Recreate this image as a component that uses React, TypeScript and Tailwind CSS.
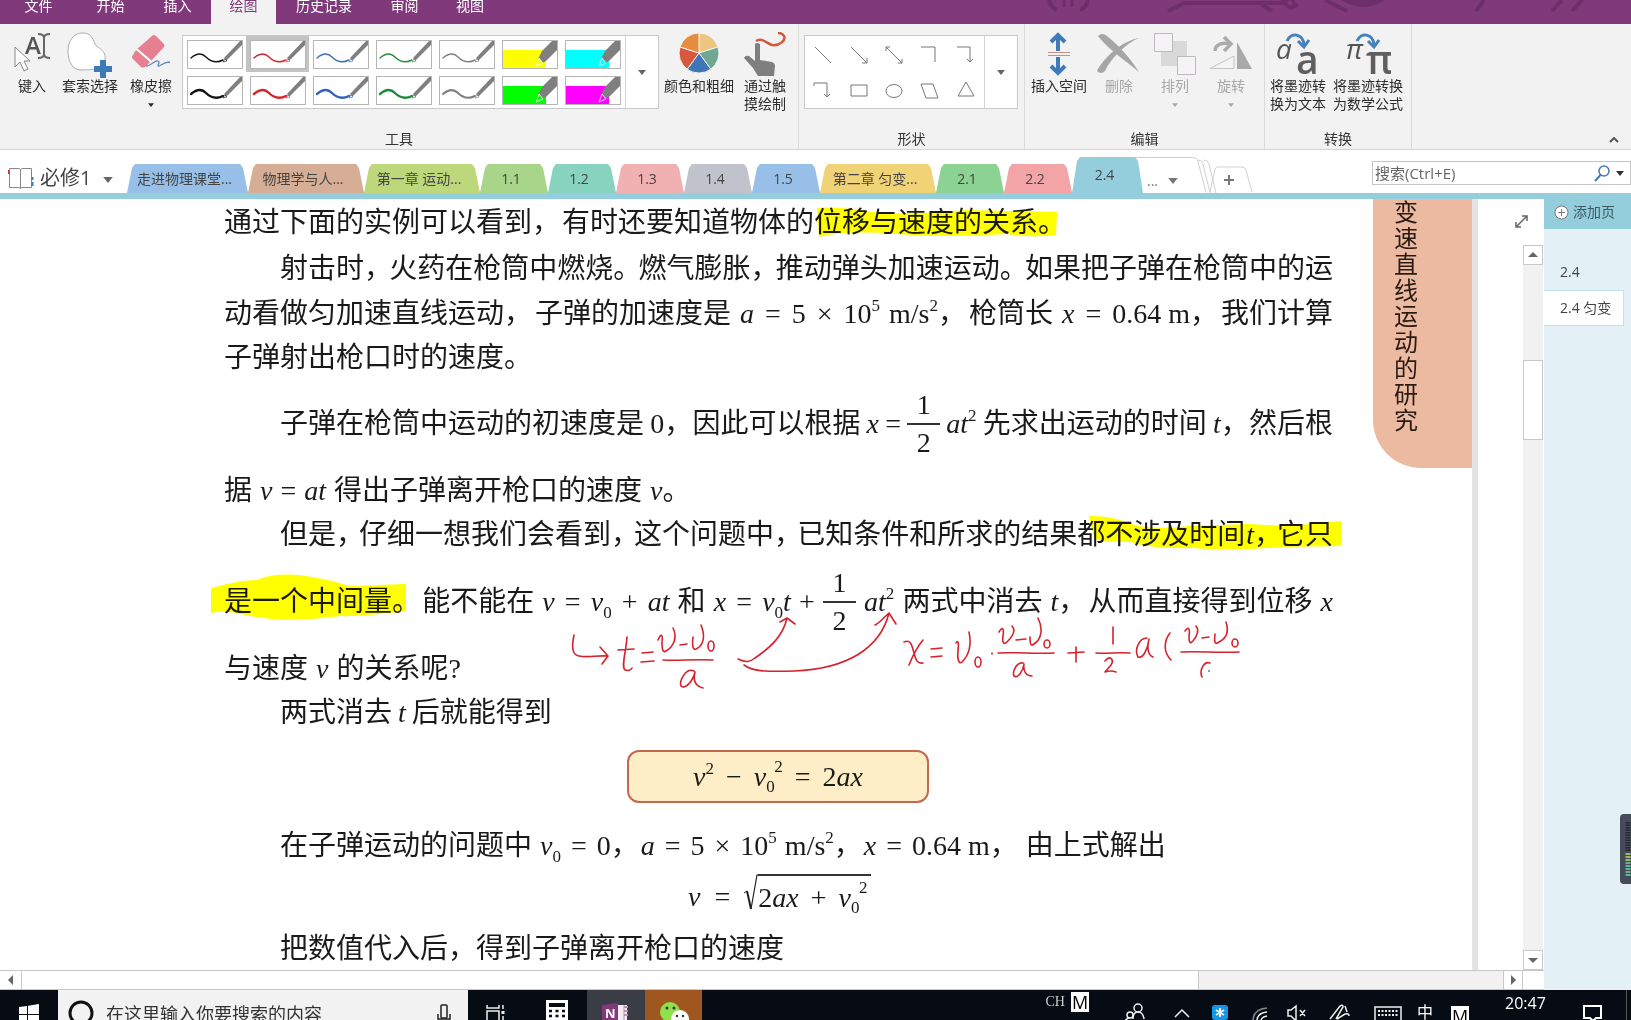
import React, { useState } from 'react';
import clsx from 'clsx';

const sections = [
  { name: '走进物理课堂...', width: 'w-[121px]', color: 'bg-[#98bfe8]' },
  { name: '物理学与人...', width: 'w-[116px]', color: 'bg-[#d5ae95]' },
  { name: '第一章 运动...', width: 'w-[116px]', color: 'bg-[#bdd87a]' },
  { name: '1.1', width: 'w-[68px]', color: 'bg-[#a8d58a]' },
  { name: '1.2', width: 'w-[68px]', color: 'bg-[#87d3bf]' },
  { name: '1.3', width: 'w-[68px]', color: 'bg-[#f1b1b3]' },
  { name: '1.4', width: 'w-[68px]', color: 'bg-[#c0c3cc]' },
  { name: '1.5', width: 'w-[68px]', color: 'bg-[#98bfe8]' },
  { name: '第二章 匀变...', width: 'w-[116px]', color: 'bg-[#f0d277]' },
  { name: '2.1', width: 'w-[68px]', color: 'bg-[#8bd293]' },
  { name: '2.2', width: 'w-[68px]', color: 'bg-[#f3a4a6]' },
  { name: '2.4', width: 'w-[71px]', color: 'bg-[#94cddb]' },
];

const menus = [
  { name: '文件', width: 'w-[77px]' },
  { name: '开始', width: 'w-[67px]' },
  { name: '插入', width: 'w-[67px]' },
  { name: '绘图', width: 'w-[65px]' },
  { name: '历史记录', width: 'w-[96px]' },
  { name: '审阅', width: 'w-[65px]' },
  { name: '视图', width: 'w-[66px]' },
];

const pens = [
  { color: '#111111', size: 1.4 },
  { color: '#d8232a', size: 1.4 },
  { color: '#3a6fb5', size: 1.4 },
  { color: '#2a8a3e', size: 1.4 },
  { color: '#7f7f7f', size: 1.4 },
  { color: '#ffff00', marker: true },
  { color: '#00ffff', marker: true },
  { color: '#111111', size: 2.4 },
  { color: '#d8232a', size: 2.4 },
  { color: '#2f62b8', size: 2.4 },
  { color: '#1f8a3b', size: 2.4 },
  { color: '#7f7f7f', size: 2 },
  { color: '#00ff00', marker: true },
  { color: '#ff00ff', marker: true },
];

function Caret({ className = '' }: { className?: string }) {
  return (
    <svg width="8" height="5" viewBox="0 0 8 5" className={clsx('shrink-0', className)}>
      <path d="M0 0h8L4 5z" fill="currentColor" />
    </svg>
  );
}

// ---------- 功能区 ----------

function MenuBar() {
  const [active, setActive] = useState('绘图');
  return (
    <nav className="relative flex h-6 shrink-0 overflow-hidden bg-[#80397b]">
      {menus.map((m) => (
        <button
          key={m.name}
          onClick={() => setActive(m.name)}
          className={clsx(
            'flex h-6 justify-center text-sm leading-3',
            m.width,
            m.name === active ? 'bg-[#f2f2f2] text-[#80397b]' : 'text-white',
          )}
        >
          {m.name}
        </button>
      ))}
      <svg className="absolute right-0 top-0" width="600" height="24" viewBox="1031 0 600 24" fill="none" stroke="#6d2f69" strokeWidth="4">
        <path d="M1049 0q2 8 8 10M1088 0q-2 8-8 10" />
        <path d="M1064 0v7M1072 0v7" strokeWidth="3" />
        <path d="M1168 11l16-8h104M1262 5l10 6M1282 0l8 8 8-3M1325 0l22 11" />
        <circle cx="1290" cy="3" r="4" fill="#80397b" strokeWidth="3" />
        <path d="M1341 0q22 14 44 0z" fill="#6d2f69" stroke="none" />
        <path d="M1484 0l-8 11M1562 0l-10 11M1582 0l-10 11" />
      </svg>
    </nav>
  );
}

function ToolButton({ label, width, icon, disabled, caret }: {
  label: string[];
  width: string;
  icon: React.ReactNode;
  disabled?: boolean;
  caret?: boolean;
}) {
  return (
    <button
      disabled={disabled}
      className={clsx('flex shrink-0 flex-col items-center pt-2', width, disabled ? 'text-[#a8a8a8]' : 'text-[#2b2b2b]')}
    >
      <span className="flex h-[45px] items-start justify-center">{icon}</span>
      {label.map((l) => (
        <span key={l} className="whitespace-nowrap text-sm leading-[18px]">{l}</span>
      ))}
      {caret && <Caret className="mt-2 h-1 w-1.5" />}
    </button>
  );
}

function Group({ title, width, children }: { title: string; width: string; children: React.ReactNode }) {
  return (
    <section className={clsx('flex shrink-0 flex-col border-r border-[#dadada]', width)}>
      <div className="flex flex-1 items-start">{children}</div>
      <h2 className="pb-[3px] text-center text-sm leading-[14px] text-[#333]">{title}</h2>
    </section>
  );
}

function PenIcon({ color, size, marker }: { color: string; size?: number; marker?: boolean }) {
  return (
    <svg width="54" height="27" viewBox="0 0 54 27">
      {marker ? (
        <>
          <path d="M0 9h43v18H0z" fill={color} />
          <path d="M54 0v9L43 20l-5 3-3-5 4-8L49 0z" fill="#7f7f7f" />
          <path d="M36 17l4 5-7 3z" fill={color} stroke="#fff" strokeWidth=".8" />
        </>
      ) : (
        <>
          <path d="M3 17C9 12 14 12 18 16s9 7 17 3" fill="none" stroke={color} strokeWidth={size} strokeLinecap="round" />
          <path d="M36 17L52 0h2v4L38 20z" fill="#7f7f7f" />
          <path d="M37 18l2 2-4 1z" fill="#fff" stroke={color} strokeWidth=".6" />
        </>
      )}
    </svg>
  );
}

function PenGallery() {
  const [selected, setSelected] = useState(1);
  return (
    <div className="ml-0.5 mt-[11px] flex h-[74px] w-[477px] border border-[#c9c9c9] bg-white">
      <div className="grid flex-1 grid-cols-7 border-r border-[#d5d5d5]">
        {pens.map((p, i) => (
          <button
            key={i}
            aria-label={`笔 ${i + 1}`}
            onClick={() => setSelected(i)}
            className={clsx('flex items-center justify-center', i === selected && 'bg-[#c3c3c3]')}
          >
            <span className="border border-[#b5b5b5] bg-white">
              <PenIcon {...p} />
            </span>
          </button>
        ))}
      </div>
      <button aria-label="更多笔" className="flex w-8 items-center justify-center text-[#666]">
        <Caret />
      </button>
    </div>
  );
}

const shapes = [
  'M4 5l16 16',
  'M4 5l16 16M20 16v5h-5',
  'M4 5l16 16M20 17v4h-4M4 9V5h4',
  'M3 5h14v15',
  'M3 5h13v15M13 17l3 3 3-3',
  'M3 8V5h13v14M13 16l3 3 3-3',
  'M4 7h16v11H4z',
  'M4 13a8 6.500 0 1 0 16 0a8 6.500 0 1 0-16 0z',
  'M3 6h12l5 14H8z',
  'M12 4l8 14H4z',
];

function ShapeGallery() {
  return (
    <div className="ml-[5px] mt-[11px] flex h-[74px] w-[214px] border border-[#c9c9c9] bg-white">
      <div className="grid flex-1 grid-cols-5 border-r border-[#d5d5d5]">
        {shapes.map((d, i) => (
          <button key={i} aria-label={`形状 ${i + 1}`} className="flex items-center justify-center">
            <svg width="24" height="24" viewBox="0 0 24 24" fill="none" stroke="#777" strokeWidth="1">
              <path d={d} />
            </svg>
          </button>
        ))}
      </div>
      <button aria-label="更多形状" className="flex w-8 items-center justify-center text-[#666]">
        <Caret />
      </button>
    </div>
  );
}

const TypeIcon = () => (
  <svg width="40" height="44" viewBox="12 32 40 44">
    <text x="25" y="54" fontSize="24" fontWeight="600" fill="#555" fontFamily="Open Sans, sans-serif">A</text>
    <path d="M38 34q6 0 6 4v16q0 4-6 4M50 34q-6 0-6 4M44 54q0 4 6 4" fill="none" stroke="#666" strokeWidth="2" />
    <path d="M15 47v20l5-5 4 9 4-2-4-8h6z" fill="#fff" stroke="#888" />
  </svg>
);

const LassoIcon = () => (
  <svg width="46" height="46" viewBox="71 32 46 46">
    <path d="M87 33c-10 0-15 8-15 18s4 20 15 19c8-1 20 2 22-10 2-10-8-12-10-16-2-6-5-11-12-11z" fill="#fff" stroke="#999" strokeWidth=".8" />
    <path d="M104 60h6v6h6v6h-6v6h-6v-6h-6v-6h6z" fill="#3f7ab8" />
  </svg>
);

const EraserIcon = () => (
  <svg width="40" height="38" viewBox="135 34 40 38">
    <path d="M156 38q2-2 4 0l8 8q1 2 0 3l-13 14-14-12z" fill="#e67f92" />
    <path d="M140 52l14 12-5 5q-2 1-4 0l-8-8q-2-2 0-4z" fill="#e67f92" />
    <path d="M141 51l14 12" stroke="#fff" strokeWidth="1.500" />
    <path d="M150 68c5 0 9-6 12-5s-2 6 1 5 5-4 11-4" fill="none" stroke="#5b87c0" strokeWidth="1.300" />
  </svg>
);

const PieIcon = () => (
  <svg width="42" height="42" viewBox="-21 -21 42 42" stroke="#f2f2f2" strokeWidth="1">
    <path d="M0 0V-20A20 20 0 0 1 19-6z" fill="#ecc681" />
    <path d="M0 0L19-6A20 20 0 0 1 11.800 16.200z" fill="#70a792" />
    <path d="M0 0L11.800 16.200A20 20 0 0 1-11.800 16.200z" fill="#3f76b8" />
    <path d="M0 0L-11.800 16.200A20 20 0 0 1-19-6z" fill="#d8583d" />
    <path d="M0 0L-19-6A20 20 0 0 1 0-20z" fill="#e58c3f" />
  </svg>
);

const TouchIcon = () => (
  <svg width="44" height="44" viewBox="744 31 44 44">
    <path d="M757 40c6-4 10 2 16 4 8 1 14-5 12-9-1-2-4-3-6-3" fill="none" stroke="#d2573d" strokeWidth="2.500" />
    <path d="M756 43q2-2 5 0v16l12 2q3 1 3 4l-1 10h-16l-5-8-9-10q1-3 5-2l6 5z" fill="#7f7f7f" />
  </svg>
);

const SpaceIcon = () => (
  <svg width="24" height="44" viewBox="1048 31 24 44">
    <path d="M1057 36h4v14h-4zM1057 56h4v14h-4z" fill="#3f7ab8" />
    <path d="M1052 41l7-7 7 7M1052 65l7 7 7-7" fill="none" stroke="#3f7ab8" strokeWidth="4" />
    <path d="M1049 51.500h22M1049 54.500h22" stroke="#c98f86" />
  </svg>
);

const DeleteIcon = () => (
  <svg width="44" height="42" viewBox="1098 32 44 42">
    <path d="M1099 36q4-4 9 0c10 8 22 20 32 36-14-12-28-20-41-36z" fill="#a6a6a6" />
    <path d="M1140 38c-14 6-28 20-34 33q-4 4-8 0c6-12 24-30 42-33z" fill="#a6a6a6" />
  </svg>
);

const ArrangeIcon = () => (
  <svg width="44" height="44" viewBox="1153 31 44 44">
    <path d="M1161 40h26v25h-26z" fill="#d9d9d9" />
    <path d="M1154.500 32.500h18v18h-18zM1177.500 55.500h18v18h-18z" fill="#f5f3f5" stroke="#bbb" />
  </svg>
);

const RotateIcon = () => (
  <svg width="44" height="38" viewBox="1209 32 44 38">
    <path d="M1215 51c0-7 8-9 15-7" fill="none" stroke="#ababab" strokeWidth="3.500" />
    <path d="M1224 37l7 7-7 7" fill="none" stroke="#ababab" strokeWidth="3.500" />
    <path d="M1210 68.500h24V56z" fill="#f5f3f5" stroke="#c4c4c4" />
    <path d="M1237 42l15 27h-15z" fill="#a9a9a9" />
  </svg>
);

function ConvertIcon({ glyph }: { glyph: string }) {
  return (
    <svg width="46" height="44" viewBox="0 0 46 44">
      <text x="1" y="27" fontSize="28" fontStyle="italic" fill="#555" fontFamily="Open Sans, sans-serif">{glyph}</text>
      <text x="21" y="42" fontSize="39" fontWeight="600" fill="#5f5f5f" fontFamily="Open Sans, sans-serif">{glyph}</text>
      <path d="M12 9c4-9 16-8 17 4" fill="none" stroke="#4680bd" strokeWidth="3" />
      <path d="M23 9l6 6 5-7" fill="none" stroke="#4680bd" strokeWidth="3" />
    </svg>
  );
}

function Ribbon() {
  return (
    <div className="flex h-[126px] shrink-0 border-b border-[#d4d4d4] bg-[#f2f2f2]">
      <Group title="工具" width="w-[799px]">
        <div className="flex pl-1.5">
          <ToolButton label={['键入']} width="w-[52px]" icon={<TypeIcon />} />
          <ToolButton label={['套索选择']} width="w-[64px]" icon={<LassoIcon />} />
          <ToolButton label={['橡皮擦']} width="w-[58px]" icon={<EraserIcon />} caret />
          <PenGallery />
          <ToolButton label={['颜色和粗细']} width="w-[80px]" icon={<PieIcon />} />
          <ToolButton label={['通过触', '摸绘制']} width="w-[52px]" icon={<TouchIcon />} />
        </div>
      </Group>
      <Group title="形状" width="w-[226px]">
        <ShapeGallery />
      </Group>
      <Group title="编辑" width="w-[240px]">
        <ToolButton label={['插入空间']} width="w-[68px]" icon={<SpaceIcon />} />
        <ToolButton label={['删除']} width="w-[52px]" icon={<DeleteIcon />} disabled />
        <ToolButton label={['排列']} width="w-[60px]" icon={<ArrangeIcon />} disabled caret />
        <ToolButton label={['旋转']} width="w-[52px]" icon={<RotateIcon />} disabled caret />
      </Group>
      <Group title="转换" width="w-[147px]">
        <ToolButton label={['将墨迹转', '换为文本']} width="w-[66px]" icon={<ConvertIcon glyph="a" />} />
        <ToolButton label={['将墨迹转换', '为数学公式']} width="w-[74px]" icon={<ConvertIcon glyph="π" />} />
      </Group>
      <button aria-label="折叠功能区" className="ml-auto mr-3 self-end pb-1.5">
        <svg width="10" height="6" viewBox="0 0 10 6" fill="none" stroke="#555" strokeWidth="2">
          <path d="M1 5l4-4 4 4" />
        </svg>
      </button>
    </div>
  );
}

// ---------- 分区标签 ----------

function SectionBar() {
  const [active, setActive] = useState('2.4');
  return (
    <div className="flex h-[49px] shrink-0 items-end border-b-[6px] border-[#94cddb] bg-white pl-2">
      <button className="flex h-[31px] w-[119px] items-center text-[#444]">
        <svg width="26" height="22" viewBox="0 0 26 22" fill="none" stroke="#888" className="mr-1.5 shrink-0">
          <path d="M1.500 1.500h9.500l1.500 1 1.500-1h9.500v19H14l-1.500 1-1.500-1H1.500zM12.500 2v19" />
          <path d="M.500 3v4" stroke="#c0392b" strokeWidth="2" />
          <path d="M24.500 10v3M24.500 15v4" stroke="#3a7ebf" strokeWidth="2" />
        </svg>
        <span className="text-xl leading-6">必修1</span>
        <Caret className="ml-3 mt-1 h-1.5 w-2.5 text-[#666]" />
      </button>
      <div role="tablist" className="flex items-end">
        {sections.map((s) => (
          <button
            key={s.name}
            role="tab"
            aria-selected={s.name === active}
            onClick={() => setActive(s.name)}
            className={clsx(
              'shrink-0 whitespace-nowrap pr-1.5 text-sm text-[#444]',
              '[clip-path:polygon(0_100%,5px_4px,8px_0,calc(100%_-_8px)_0,calc(100%_-_5px)_4px,100%_100%)]',
              s.width,
              s.color,
              s.name === active ? 'h-9' : 'h-[29px]',
            )}
          >
            {s.name}
          </button>
        ))}
      </div>
      <button aria-label="更多分区" className="relative flex h-9 w-[67px] items-center pl-1 pt-3 text-[#777]">
        <svg className="absolute -left-2 top-0" width="84" height="36" viewBox="0 0 84 36" fill="none" stroke="#d0d0d0">
          <path d="M0 .500h58q4 0 5 4l8 31M63 3q4 0 5 4l7 29M69 3q4 0 5 4l7 29" />
        </svg>
        <span className="text-sm leading-4">...</span>
        <Caret className="ml-2.5 h-1.5 w-2.5" />
      </button>
      <button aria-label="新建分区" className="relative flex h-[27px] w-[43px] items-center justify-center text-[#777]">
        <svg width="43" height="27" viewBox="0 0 43 27" fill="none" stroke="#d0d0d0">
          <path d="M0 26L5 3q1-2 3-2h24q3 0 4 3l6 22" />
          <path d="M19 9v10M14 14h10" stroke="#777" strokeWidth="2" />
        </svg>
      </button>
      <label className="mb-2 ml-auto flex h-6 w-[259px] items-center border border-[#c6c6c6] pl-0.5 pr-1.5">
        <input
          aria-label="搜索"
          placeholder="搜索(Ctrl+E)"
          className="min-w-0 flex-1 text-[15px] text-[#555] outline-none placeholder:text-[#666]"
        />
        <svg width="16" height="17" viewBox="0 0 16 17" fill="none" stroke="#4479b0" strokeWidth="1.500">
          <circle cx="10" cy="6" r="5" />
          <path d="M6.500 10L1 16" strokeWidth="2" />
        </svg>
        <Caret className="ml-1.5 text-[#333]" />
      </label>
    </div>
  );
}

// ---------- 笔记正文 ----------

function Line({ height = 'h-11', justify, indent, children }: {
  height?: string;
  justify?: boolean;
  indent?: boolean;
  children: React.ReactNode;
}) {
  return (
    <p className={clsx('flex shrink-0 items-center whitespace-nowrap', height, justify ? 'justify-between' : 'gap-2', indent && 'pl-14')}>
      {children}
    </p>
  );
}

// 半角宽度的标点
const P = ({ children }: { children: string }) => <span className="pr-2 [font-feature-settings:'halt']">{children}</span>;
const Op = ({ children }: { children: string }) => <span className="px-0.5">{children}</span>;
const Sup = ({ children }: { children: string }) => <sup className="static align-[12px] text-[17px] not-italic">{children}</sup>;
const Sub = ({ children }: { children: string }) => <sub className="static align-[-7px] text-[17px] not-italic">{children}</sub>;

const Half = () => (
  <span className="flex w-[33px] flex-col text-center leading-9">
    <span className="border-b-2 border-[#333]">1</span>
    <span>2</span>
  </span>
);

const V0Squared = () => (
  <span className="flex items-center">
    <i>v</i>
    <span className="flex flex-col text-[17px] leading-5">
      <span className="pl-2">2</span>
      <span>0</span>
    </span>
  </span>
);

function Ink() {
  return (
    <svg className="pointer-events-none absolute left-0 top-0 mix-blend-multiply" width="1370" height="771" viewBox="0 199 1370 771" fill="none">
      <g fill="#ffff00">
        <path d="M817 208q20-2 50 3t100-1l90 2-1 23q-24 3-50-1-60 4-110 0t-77 3z" />
        <path d="M1089 516q20-1 40 7t60 3l60-2 40 2 52-5v25l-60 1q-50 4-90 1-40 1-60-6-36 0-37-5z" />
        <path d="M211 588q30-8 46-8 16-7 42-5 30 4 50 11l57-2v27q-50 6-65 5-60 8-100-2-16-4-30-1z" />
      </g>
      <g stroke="#d5222c" strokeWidth="1.600" strokeLinecap="round" strokeLinejoin="round">
        <path d="M574 635c-3 14-1 20 5 21 10 2 18-1 29 0M600 647l8 9-6 8" />
        <path d="M627 637c-1 15-6 30-2 33 3 1 6 0 7-2M618 650l16-1M642 653l11-1M641 662l13-1" />
        <path d="M658 640c3-7 5-6 4 2 0 8 1 11 4 9 7-4 12-13 7-23M680 645l7-1M693 637c-1 10 0 13 3 12 7-3 10-12 5-24" />
        <ellipse cx="711" cy="646" rx="3" ry="5" />
        <path d="M663 660c15 1 30-1 50 0M694 671c-8-4-15 10-13 15 4 4 12-5 14-14-2 8 0 14 8 16" />
        <path d="M738 659c8 4 12 3 17-1 16-11 28-22 32-40M780 622l7-4 8 6" />
        <path d="M744 665c8 6 20 7 50 6 52-2 86-22 95-58M875 625c6-3 9-8 14-12l7 11" />
        <path d="M904 642c7-3 8 4 10 11 2 7 3 11 9 10M923 640c-5 6-10 15-14 25M931 649l11-1M931 657l11-1" />
        <path d="M956 643c2-4 3 0 2 8s1 14 4 11c6-6 10-16 7-30" />
        <ellipse cx="978" cy="662" rx="3" ry="5" />
        <path d="M992 653v1M999 632c4-7 5-2 4 4-1 7 1 9 4 6 6-6 9-12 5-16M1016 640l10-1M1030 637c0 8 1 9 4 7 8-5 9-16 4-26" />
        <ellipse cx="1047" cy="644" rx="3" ry="4" />
        <path d="M998 653c20-1 36 1 56 0M1023 663c-6-1-11 8-9 13 4 3 9-5 10-12-1 7 2 12 8 12" />
        <path d="M1068 653l16-1M1076 647v15M1113 627v17M1096 653c10 1 22-1 34 0M1105 661c4-6 10-2 6 4l-6 7q6-2 11 0" />
        <path d="M1147 638c-8 0-13 12-9 19 5 2 10-8 11-18-2 9-1 16 4 18M1170 633c-7 9-6 20 1 27" />
        <path d="M1185 631c4-6 5-1 4 5 0 7 1 8 4 5 5-6 6-12 3-15M1202 638l7-1M1215 634c-1 9 0 11 4 8 8-4 10-11 7-20" />
        <ellipse cx="1235" cy="643" rx="3" ry="4" />
        <path d="M1181 652c18-1 36 1 58 0M1210 663c-6-2-11 7-8 14" />
      </g>
      <circle cx="1209" cy="671" r="1" fill="#777" />
    </svg>
  );
}

function Article() {
  return (
    <article className="ml-[224px] w-[1109px] shrink-0 font-['Liberation_Serif','Noto_Sans_CJK_SC',serif] text-[28px] leading-none text-[#1a1a1a]">
      <Line height="h-[47px]">
        <span>通过下面的实例可以看到，</span>
        <span className="-ml-1.5">有时还要知道物体的位移与速度的关系。</span>
      </Line>
      <Line height="h-[45px]" indent justify>
        <span>射击时<P>，</P></span>
        <span>火药在枪筒中燃烧<P>。</P></span>
        <span>燃气膨胀<P>，</P></span>
        <span>推动弹头加速运动<P>。</P></span>
        <span>如果把子弹在枪筒中的运</span>
      </Line>
      <Line height="h-[45px]" justify>
        <span>动看做匀加速直线运动<P>，</P></span>
        <span>子弹的加速度是</span>
        <i>a</i>
        <Op>=</Op>
        <span>5</span>
        <Op>×</Op>
        <span>10<Sup>5</Sup></span>
        <span>m/s<Sup>2</Sup><P>，</P></span>
        <span>枪筒长</span>
        <i>x</i>
        <Op>=</Op>
        <span>0.64 m<P>，</P></span>
        <span>我们计算</span>
      </Line>
      <Line height="h-[43px]">子弹射出枪口时的速度。</Line>
      <Line height="h-[90px]" indent justify>
        <span>子弹在枪筒中运动的初速度是</span>
        <span>0<P>，</P></span>
        <span>因此可以根据</span>
        <i>x</i>
        <span>=</span>
        <Half />
        <i>at<Sup>2</Sup></i>
        <span>先求出运动的时间</span>
        <span><i>t</i><P>，</P></span>
        <span>然后根</span>
      </Line>
      <Line>
        <span>据</span>
        <i>v</i>
        <span>=</span>
        <i>at</i>
        <span>得出子弹离开枪口的速度</span>
        <span><i>v</i>。</span>
      </Line>
      <Line indent justify>
        <span>但是<P>，</P></span>
        <span>仔细一想我们会看到<P>，</P></span>
        <span>这个问题中<P>，</P></span>
        <span>已知条件和所求的结果都不涉及时间</span>
        <span><i>t</i><P>，</P></span>
        <span>它只</span>
      </Line>
      <Line height="h-[90px]" justify>
        <span>是一个中间量<P>。</P></span>
        <span>能不能在</span>
        <i>v</i>
        <Op>=</Op>
        <span><i>v</i><Sub>0</Sub></span>
        <Op>+</Op>
        <i>at</i>
        <span>和</span>
        <i>x</i>
        <Op>=</Op>
        <span><i>v</i><Sub>0</Sub><i>t</i></span>
        <span>+</span>
        <Half />
        <i>at<Sup>2</Sup></i>
        <span>两式中消去</span>
        <span><i>t</i><P>，</P></span>
        <span>从而直接得到位移</span>
        <i>x</i>
      </Line>
      <Line>
        <span>与速度</span>
        <i>v</i>
        <span>的关系呢?</span>
      </Line>
      <p className="flex h-11 items-center gap-1.5 pl-14">
        <span>两式消去</span>
        <i>t</i>
        <span>后就能得到</span>
      </p>
      <p className="ml-[403px] mt-[15px] flex h-[53px] w-[302px] items-center justify-center gap-3 rounded-xl border-2 border-[#c4694f] bg-[#fdeec8]">
        <i>v<Sup>2</Sup></i>
        <span>−</span>
        <V0Squared />
        <span>=</span>
        <span>2<i>ax</i></span>
      </p>
      <div className="mt-[21px] flex">
        <Line indent>
          <span>在子弹运动的问题中</span>
          <span><i>v</i><Sub>0</Sub></span>
          <Op>=</Op>
          <span>0<P>，</P></span>
          <i>a</i>
          <Op>=</Op>
          <span>5</span>
          <Op>×</Op>
          <span>10<Sup>5</Sup></span>
          <span>m/s<Sup>2</Sup><P>，</P></span>
          <i>x</i>
          <Op>=</Op>
          <span>0.64 m，</span>
          <span>由上式解出</span>
        </Line>
      </div>
      <p className="ml-[464px] flex h-[58px] items-center gap-3.5">
        <i>v</i>
        <span>=</span>
        <span className="flex h-[46px]">
          <svg width="14" height="46" viewBox="0 0 14 46" fill="none" stroke="#222">
            <path d="M0 19l3-2" />
            <path d="M3 17l4 18" strokeWidth="2" />
            <path d="M7 35L13 1h1" strokeWidth="1.200" />
          </svg>
          <span className="flex items-center gap-3 border-t-2 border-[#333] pr-1">
            <span>2<i>ax</i></span>
            <span>+</span>
            <V0Squared />
          </span>
        </span>
      </p>
      <Line height="h-[46px]" indent>把数值代入后，得到子弹离开枪口的速度</Line>
    </article>
  );
}

function PageList() {
  return (
    <aside className="relative w-[87px] shrink-0 bg-[#e3f1f7] text-sm text-[#444]">
      <button className="flex h-[30px] w-full items-center gap-1 bg-[#94cddb] pb-1 pl-2.5 text-[#3f5a63]">
        <svg width="15" height="15" viewBox="0 0 15 15" fill="none" stroke="#7b7b7b">
          <circle cx="7.500" cy="7.500" r="6.500" fill="#fff" />
          <path d="M7.500 4v7M4 7.500h7" />
        </svg>
        <span className="whitespace-nowrap">添加页</span>
      </button>
      <ul className="pt-[25px]">
        <li><a href="#p1" className="flex h-9 items-center pl-4">2.4</a></li>
        <li><a href="#p2" className="mr-[7px] flex h-9 items-center whitespace-nowrap border border-l-0 border-[#c5e2ec] bg-white pl-4">2.4 匀变</a></li>
      </ul>
      <svg className="absolute right-0 top-[615px]" width="11" height="70" viewBox="0 0 11 70">
        <path d="M11 0H4Q0 0 0 4v62q0 4 4 4h7z" fill="#454b59" />
        <path d="M8 8v30" stroke="#262a33" strokeWidth="5" strokeDasharray="1.500 1" />
        <path d="M8 39v9" stroke="#9bbb5a" strokeWidth="5" strokeDasharray="2 1" />
        <path d="M8 48v15" stroke="#59b88f" strokeWidth="5" strokeDasharray="2 1" />
      </svg>
    </aside>
  );
}

function ScrollButton({ label, d }: { label: string; d: string }) {
  return (
    <button aria-label={label} className="flex h-5 w-5 shrink-0 items-center justify-center border border-[#c8c8c8] bg-white">
      <svg width="10" height="10" viewBox="0 0 10 10"><path d={d} fill="#666" /></svg>
    </button>
  );
}

function Notebook() {
  return (
    <main className="flex min-h-0 flex-1">
      <div className="flex min-w-0 flex-1 flex-col">
        <div className="flex min-h-0 flex-1">
          <div className="relative flex min-w-0 flex-1 overflow-hidden bg-white">
            <Article />
            <div className="ml-10 flex h-[269px] w-[99px] shrink-0 items-end rounded-bl-[48px] bg-[#ebbaa0] pb-[35px] pl-[21px]">
              <p className="w-6 text-2xl leading-[26px] text-[#2a1a14]">变速直线运动的研究</p>
            </div>
            <div className="w-1.5 shrink-0 bg-[#e4e4e4]" />
            <Ink />
          </div>
          <div className="relative flex w-[21px] shrink-0 flex-col pt-[46px]">
            <button aria-label="全屏" className="absolute right-4 top-4">
              <svg width="13" height="13" viewBox="0 0 13 13" fill="none" stroke="#666" strokeWidth="1.500">
                <path d="M1 12L12 1M7 1h5v5M1 7v5h5" />
              </svg>
            </button>
            <ScrollButton label="向上滚动" d="M0 7l5-5 5 5z" />
            <div className="w-5 flex-1 bg-[#f1f1f1] pt-[95px]">
              <div className="h-20 border border-[#c8c8c8] bg-white" />
            </div>
            <ScrollButton label="向下滚动" d="M0 3l5 5 5-5z" />
          </div>
        </div>
        <div className="flex h-5 shrink-0 border-y border-[#c8c8c8] bg-[#f1f1f1]">
          <button aria-label="向左滚动" className="flex w-[22px] items-center justify-center border-r border-[#c8c8c8] bg-white">
            <svg width="10" height="10" viewBox="0 0 10 10"><path d="M7 0L2 5l5 5z" fill="#666" /></svg>
          </button>
          <div className="w-[1177px] border-r border-[#c8c8c8] bg-white" />
          <button aria-label="向右滚动" className="ml-auto flex w-5 items-center justify-center border-x border-[#c8c8c8] bg-white">
            <svg width="10" height="10" viewBox="0 0 10 10"><path d="M3 0l5 5-5 5z" fill="#666" /></svg>
          </button>
          <div className="w-[21px] bg-white" />
        </div>
      </div>
      <PageList />
    </main>
  );
}

// ---------- 任务栏 ----------

function TrayIcon({ width, children }: { width: string; children: React.ReactNode }) {
  return (
    <span className={clsx('flex shrink-0 justify-center', width)}>
      <svg width="30" height="30" viewBox="0 0 30 30" fill="none" stroke="#f0f0f0" strokeWidth="1.500" className="shrink-0">
        {children}
      </svg>
    </span>
  );
}

const ImeBadge = () => (
  <span className="flex h-5 w-[18px] items-center justify-center bg-white text-lg leading-5 text-black">M</span>
);

function Taskbar() {
  return (
    <footer className="flex h-[30px] shrink-0 overflow-hidden bg-[#060b14] text-white">
      <button aria-label="开始" className="w-[58px] pl-[19px]">
        <svg width="20" height="30" viewBox="0 0 20 30" fill="#fff">
          <path d="M0 17l8-1v8H0zM9 15.800l11-1.800v10H9zM0 25h8v9H0zM9 25h11v9H9z" />
        </svg>
      </button>
      <label className="flex w-[410px] shrink-0 overflow-hidden bg-[#f2f2f2] pl-2.5">
        <svg width="28" height="30" viewBox="0 0 28 30" fill="none" stroke="#111" strokeWidth="3" className="shrink-0">
          <circle cx="13" cy="23" r="11" />
        </svg>
        <input
          aria-label="任务栏搜索"
          placeholder="在这里输入你要搜索的内容"
          className="ml-2.5 mt-2 h-8 min-w-0 flex-1 text-lg leading-8 outline-none placeholder:text-[#333]"
        />
        <svg width="16" height="30" viewBox="0 0 16 30" fill="none" stroke="#222" strokeWidth="1.500" className="mr-4 shrink-0">
          <rect x="5" y="15" width="6" height="13" rx="1" />
          <path d="M2 24v5h12v-5" />
        </svg>
      </label>
      <TrayIcon width="w-[57px]">
        <path d="M5 15v3h12v-3M5 31v-10h12v10M21 15v4M21 26v5" />
        <path d="M21 21v3" strokeWidth="3" />
      </TrayIcon>
      <TrayIcon width="w-[62px]">
        <path d="M5 10h22v22H5z" fill="#fff" stroke="none" />
        <path d="M8 13h16v4H8z" fill="#060b14" stroke="none" />
        <path d="M8 21h16M8 26h16" stroke="#060b14" strokeWidth="2.500" strokeDasharray="3 3.500" />
      </TrayIcon>
      <button aria-label="OneNote" className="flex w-[58px] justify-center bg-[#3a3d46]">
        <svg width="28" height="30" viewBox="0 0 28 30">
          <path d="M14 15h11v15H14z" fill="#f4ecf4" />
          <path d="M22 15v15" stroke="#b98fb6" strokeWidth="1" />
          <path d="M22 17h4M22 21h4M22 25h4" stroke="#b98fb6" strokeWidth="2" />
          <path d="M0 15l16-2v17H0z" fill="#80397b" />
          <text x="3" y="28" fontSize="13" fontWeight="700" fill="#fff" fontFamily="Open Sans, sans-serif">N</text>
        </svg>
      </button>
      <button aria-label="微信" className="flex w-[57px] justify-center bg-[#a0561f]">
        <svg width="32" height="30" viewBox="0 0 32 30">
          <ellipse cx="12" cy="22" rx="10" ry="10" fill="#8fe04a" />
          <circle cx="22" cy="29" r="9" fill="#fff" />
          <g fill="#333">
            <circle cx="9" cy="18" r="1.500" />
            <circle cx="16" cy="18" r="1.500" />
            <circle cx="19" cy="26" r="1.200" />
            <circle cx="25" cy="26" r="1.200" />
          </g>
        </svg>
      </button>
      <div className="ml-auto flex">
        <span className="mr-1.5 font-['Liberation_Serif',serif] text-sm leading-6 text-[#ccc]">CH</span>
        <span className="mr-[18px] pt-0.5"><ImeBadge /></span>
        <TrayIcon width="w-[56px]">
          <circle cx="18" cy="18" r="4" />
          <circle cx="10" cy="25" r="3" />
          <path d="M13 29q0-7 5-7t6 7M5 32q1-4 5-4" />
        </TrayIcon>
        <TrayIcon width="w-[38px]"><path d="M8 27l7-7 7 7" /></TrayIcon>
        <TrayIcon width="w-[38px]">
          <rect x="7" y="15" width="16" height="15" rx="3" fill="#1296e8" stroke="none" />
          <path d="M15 18v9M11 20l8 5M19 20l-8 5" strokeWidth="2" />
        </TrayIcon>
        <TrayIcon width="w-[42px]">
          <path d="M8 31q0-12 14-13" stroke="#888" />
          <path d="M12 31q0-8 10-9M16 31q0-4 6-5" />
        </TrayIcon>
        <TrayIcon width="w-[32px]">
          <path d="M6 20h3l5-4v15l-5-5H6zM18 20l5 6M23 20l-5 6" />
        </TrayIcon>
        <TrayIcon width="w-[54px]">
          <path d="M5 29l10-13q3-2 3 1l-7 12M12 29l8-5q4-1 4 2M20 16l2 6" />
        </TrayIcon>
        <TrayIcon width="w-[42px]">
          <path d="M2 17h26v14H2z" />
          <path d="M5 21h20M5 25h20" strokeWidth="2" strokeDasharray="2 1.500" />
        </TrayIcon>
        <span className="ml-2 pt-1.5 text-base leading-8">中</span>
        <span className="ml-[18px] pt-4"><ImeBadge /></span>
        <time className="ml-9 w-[42px] text-base leading-[26px]">20:47</time>
        <svg width="20" height="30" viewBox="0 0 20 30" fill="none" stroke="#fff" strokeWidth="2" className="ml-9 mr-[23px]">
          <path d="M1 16h17v12h-5l-3 3-3-3H1z" />
        </svg>
        <span className="w-[5px] border-l border-[#555]" />
      </div>
    </footer>
  );
}

export default function App() {
  return (
    <div className="flex h-screen flex-col overflow-hidden bg-white font-['Open_Sans','Noto_Sans_CJK_SC',sans-serif]">
      <MenuBar />
      <Ribbon />
      <SectionBar />
      <Notebook />
      <Taskbar />
    </div>
  );
}
